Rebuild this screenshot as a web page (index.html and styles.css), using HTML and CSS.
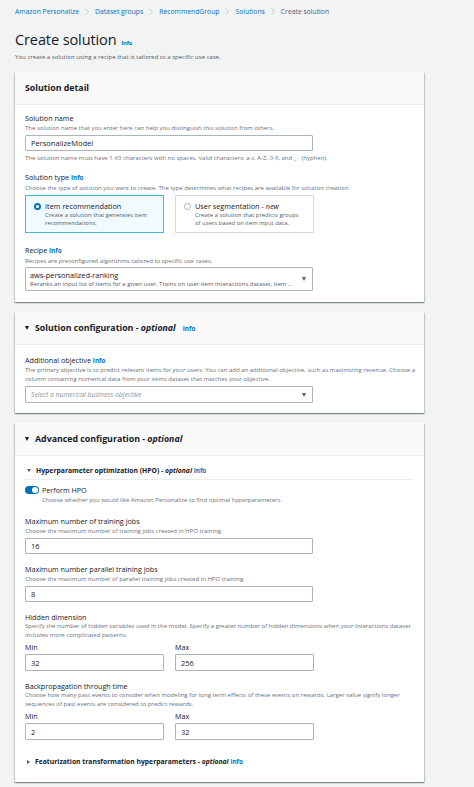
FILE: index.html
```html
<!DOCTYPE html>
<html>
<head>
<meta charset="utf-8">
<link rel="stylesheet" href="styles.css">
</head>
<body>
<div class="page">
  <nav class="crumbs">
    <a>Amazon Personalize</a><svg class="sep" viewBox="0 0 4 7"><path d="M0.5 0.5 L3.5 3.5 L0.5 6.5" fill="none" stroke="#aab7b8" stroke-width="0.7"/></svg>
    <a>Dataset groups</a><svg class="sep" viewBox="0 0 4 7"><path d="M0.5 0.5 L3.5 3.5 L0.5 6.5" fill="none" stroke="#aab7b8" stroke-width="0.7"/></svg>
    <a>RecommendGroup</a><svg class="sep" viewBox="0 0 4 7"><path d="M0.5 0.5 L3.5 3.5 L0.5 6.5" fill="none" stroke="#aab7b8" stroke-width="0.7"/></svg>
    <a>Solutions</a><svg class="sep" viewBox="0 0 4 7"><path d="M0.5 0.5 L3.5 3.5 L0.5 6.5" fill="none" stroke="#aab7b8" stroke-width="0.7"/></svg>
    <span class="cur">Create solution</span>
  </nav>
  <h1 class="title">Create solution <span class="info">Info</span></h1>
  <p class="subtitle">You create a solution using a recipe that is tailored to a specific use case.</p>

  <section class="card">
    <div class="card-head">Solution detail</div>
    <div class="card-body">
      <div class="label">Solution name</div>
      <div class="desc">The solution name that you enter here can help you distinguish this solution from others.</div>
      <div class="input w-full">PersonalizeModel</div>
      <div class="desc hint">The solution name must have 1-63 characters with no spaces. Valid characters: a-z, A-Z, 0-9, and _ - (hyphen).</div>

      <div class="label gap9">Solution type <span class="info">Info</span></div>
      <div class="desc">Choose the type of solution you want to create. The type determines what recipes are available for solution creation.</div>
      <div class="tiles">
        <div class="tile selected">
          <span class="radio on"></span>
          <div class="tile-text">
            <div class="tile-title">Item recommendation</div>
            <div class="tile-desc">Create a solution that generates item recommendations.</div>
          </div>
        </div>
        <div class="tile">
          <span class="radio"></span>
          <div class="tile-text">
            <div class="tile-title">User segmentation - <i>new</i></div>
            <div class="tile-desc">Create a solution that predicts groups of users based on item input data.</div>
          </div>
        </div>
      </div>

      <div class="label gap12">Recipe <span class="info">Info</span></div>
      <div class="desc">Recipes are preconfigured algorithms tailored to specific use cases.</div>
      <div class="select tall">
        <div class="select-text">
          <div class="sel-main">aws-personalized-ranking</div>
          <div class="sel-sub">Reranks an input list of items for a given user. Trains on user-item interactions dataset, item ...</div>
        </div>
        <span class="caret"></span>
      </div>
    </div>
  </section>

  <section class="card">
    <div class="card-head"><span class="tri down"></span>Solution configuration - <i>optional</i><span class="info head-info">Info</span></div>
    <div class="card-body b2">
      <div class="label">Additional objective <span class="info">Info</span></div>
      <div class="desc two">The primary objective is to predict relevant items for your users. You can add an additional objective, such as maximizing revenue. Choose a column containing numerical data from your items dataset that matches your objective.</div>
      <div class="select short">
        <div class="placeholder">Select a numerical business objective</div>
        <span class="caret"></span>
      </div>
    </div>
  </section>

  <section class="card">
    <div class="card-head"><span class="tri down"></span>Advanced configuration - <i>optional</i></div>
    <div class="card-body b3">
      <div class="sub-head"><span class="tri down small"></span>Hyperparameter optimization (HPO) - <i>optional</i> <span class="info">Info</span></div>
      <div class="toggle-row">
        <span class="toggle"><span class="knob"></span></span>
        <div>
          <div class="toggle-label">Perform HPO</div>
          <div class="desc">Choose whether you would like Amazon Personalize to find optimal hyperparameters.</div>
        </div>
      </div>

      <div class="label gap11">Maximum number of training jobs</div>
      <div class="desc">Choose the maximum number of training jobs created in HPO training.</div>
      <div class="input w-full num">16</div>

      <div class="label gap10">Maximum number parallel training jobs</div>
      <div class="desc">Choose the maximum number of parallel training jobs created in HPO training.</div>
      <div class="input w-full num">8</div>

      <div class="label gap10">Hidden dimension</div>
      <div class="desc two">Specify the number of hidden variables used in the model. Specify a greater number of hidden dimensions when your Interactions dataset includes more complicated patterns.</div>
      <div class="range">
        <div class="range-col">
          <div class="label">Min</div>
          <div class="input num">32</div>
        </div>
        <div class="range-col">
          <div class="label">Max</div>
          <div class="input num">256</div>
        </div>
      </div>

      <div class="label gap10">Backpropagation through time</div>
      <div class="desc two">Choose how many past events to consider when modeling for long term effects of these events on rewards. Larger value signify longer sequences of past events are considered to predict rewards.</div>
      <div class="range">
        <div class="range-col">
          <div class="label">Min</div>
          <div class="input num">2</div>
        </div>
        <div class="range-col">
          <div class="label">Max</div>
          <div class="input num">32</div>
        </div>
      </div>

      <div class="sub-head feat"><span class="tri right small"></span>Featurization transformation hyperparameters - <i>optional</i> <span class="info">Info</span></div>
    </div>
  </section>
</div>
</body>
</html>
```

FILE: styles.css
```css
html, body {
  margin: 0;
  padding: 0;
  background: #f2f3f3;
}
body {
  font-family: "Open Sans", "Noto Sans", sans-serif;
  color: #16191f;
}
.page {
  width: 409px;
  padding: 5px 0 4px 15px;
}
.crumbs {
  display: flex;
  align-items: center;
  height: 12px;
  font-size: 6.8px;
  white-space: nowrap;
}
.crumbs a { color: #0073bb; }
.crumbs .sep {
  width: 4px;
  height: 7px;
  margin: 0 6px 0 6px;
}
.crumbs .cur { color: #545b64; }
.title {
  margin: 14px 0 0;
  font-size: 14.5px;
  font-weight: 400;
  line-height: 18px;
  letter-spacing: -0.1px;
}
.info {
  color: #0073bb;
  font-size: 6.3px;
  font-weight: 700;
}
.title .info { font-size: 5.8px; margin-left: 1px; }
.subtitle {
  margin: 0;
  font-size: 6.1px;
  line-height: 10px;
  color: #545b64;
}
.card {
  background: #fff;
  margin-top: 10px;
  box-shadow: 0 1px 1px 0 rgba(0,28,36,.3), 1px 1px 1px 0 rgba(0,28,36,.15), -1px 1px 1px 0 rgba(0,28,36,.15);
}
.card:first-of-type { margin-top: 10px; }
.card-head {
  height: 32px;
  display: flex;
  align-items: center;
  padding: 0 10px;
  background: #fafafa;
  border-bottom: 1px solid #eaeded;
  font-size: 8.8px;
  font-weight: 700;
  white-space: pre;
}
.card-head i { font-weight: 700; }
.card-head .head-info { margin-left: 7px; }
.tri {
  display: inline-block;
  width: 0;
  height: 0;
  flex: none;
}
.tri.down {
  border-left: 2.5px solid transparent;
  border-right: 2.5px solid transparent;
  border-top: 4px solid #16191f;
  margin-right: 6px;
}
.tri.down.small {
  border-left-width: 2.2px;
  border-right-width: 2.2px;
  border-top-width: 3.5px;
  border-top-color: #545b64;
  margin-right: 5px;
  vertical-align: 1px;
}
.tri.right.small {
  border-top: 2.2px solid transparent;
  border-bottom: 2.2px solid transparent;
  border-left: 3.5px solid #545b64;
  margin-right: 5px;
  vertical-align: 0.5px;
}
.card-body {
  padding: 8px 10px 11px;
}
.card-body.b2 { padding: 10px 10px 10px; }
.card-body.b3 { padding: 10px 10px 12px; }
.label {
  font-size: 7.2px;
  line-height: 10px;
  white-space: nowrap;
}
.desc {
  font-size: 6px;
  line-height: 10px;
  color: #687078;
  white-space: nowrap;
}
.desc.two {
  white-space: normal;
  line-height: 9px;
  width: 392px;
}
.gap9 { margin-top: 9px; }
.gap10 { margin-top: 10px; }
.gap11 { margin-top: 11px; }
.gap12 { margin-top: 12px; }
.input {
  box-sizing: border-box;
  height: 16px;
  border: 1px solid #aab7b8;
  border-radius: 1px;
  padding: 0 5px;
  display: flex;
  align-items: center;
  font-size: 7.5px;
  background: #fff;
}
.w-full { width: 288px; margin-top: 2px; }
.hint { margin-top: 2px; }
.tiles {
  display: flex;
  gap: 11px;
  margin-top: 2px;
}
.tile {
  box-sizing: border-box;
  width: 139px;
  height: 38px;
  border: 1px solid #d5dbdb;
  display: flex;
  padding: 5px 8px 0 8px;
  gap: 4px;
}
.tile.selected {
  background: #f1faff;
  border-color: #44b9d6;
}
.radio {
  box-sizing: border-box;
  flex: none;
  width: 7px;
  height: 7px;
  border-radius: 50%;
  border: 1px solid #aab7b8;
  margin-top: 1.5px;
  background: #fff;
}
.radio.on {
  border: 2.2px solid #0073bb;
}
.tile-title {
  font-size: 7.3px;
  line-height: 10px;
}
.tile-desc {
  font-size: 5.9px;
  line-height: 8px;
  color: #545b64;
}
.select {
  box-sizing: border-box;
  width: 288px;
  border: 1px solid #aab7b8;
  border-radius: 1px;
  display: flex;
  align-items: center;
  justify-content: space-between;
  padding: 0 6px 0 4px;
  background: #fff;
}
.select.tall { height: 24px; margin-top: 1px; }
.select.short { height: 17px; margin-top: 2px; padding-left: 5px; }
.sel-main { font-size: 7.4px; line-height: 10px; }
.sel-sub { font-size: 6px; line-height: 8px; color: #545b64; }
.placeholder {
  font-size: 6.8px;
  font-style: italic;
  color: #879596;
}
.caret {
  width: 0;
  height: 0;
  border-left: 2.8px solid transparent;
  border-right: 2.8px solid transparent;
  border-top: 4px solid #545b64;
}
.sub-head {
  font-size: 6.8px;
  font-weight: 700;
  line-height: 10px;
  color: #16191f;
  padding-left: 2px;
  white-space: pre;
  padding-bottom: 3px;
  border-bottom: 1px solid #eaeded;
}
.sub-head i { font-weight: 700; }
.sub-head.feat { border-bottom: 0; margin-top: 17px; }
.toggle-row {
  display: flex;
  gap: 3px;
  margin-top: 5px;
}
.toggle {
  flex: none;
  box-sizing: border-box;
  width: 14px;
  height: 8px;
  border-radius: 4px;
  background: #0073bb;
  display: flex;
  justify-content: flex-end;
  align-items: center;
  padding: 0 1px;
  margin-top: 1px;
}
.knob {
  width: 6px;
  height: 6px;
  border-radius: 50%;
  background: #fff;
}
.toggle-label {
  font-size: 7.2px;
  line-height: 10px;
}
.num { margin-top: 2px; }
.range {
  display: flex;
  gap: 11px;
  margin-top: 2px;
}
.range-col { width: 139px; }
.range-col .input { height: 17px; }
```
